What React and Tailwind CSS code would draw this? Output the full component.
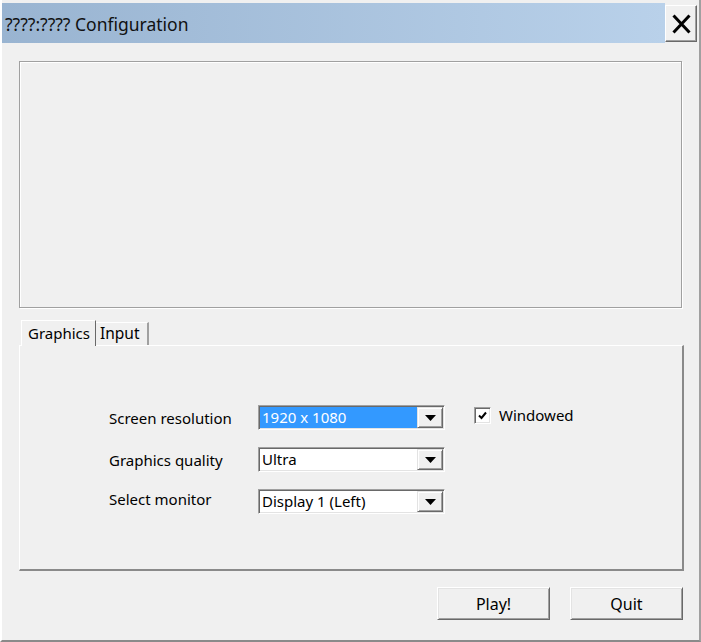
import React from "react";

const font = { fontFamily: '"Noto Sans", "Open Sans", Arial, sans-serif' };

function Arrow() {
  return (
    <svg width="11" height="6" viewBox="0 0 11 6">
      <path d="M0 0 L11 0 L5.5 6 Z" fill="#000" />
    </svg>
  );
}

function Combo({ value, selected }) {
  return (
    <div className="w-[187px] h-[25px] flex bg-white border border-t-[#a0a0a0] border-l-[#a0a0a0] border-b-white border-r-white shadow-[inset_1px_1px_0_#696969,inset_-1px_-1px_0_#e3e3e3]">
      <div className="flex-1 flex items-center pl-[1px] pt-[1px] pb-[1px]">
        <div
          className={
            "w-full h-full flex items-center pl-[2px] text-[15px] leading-none " +
            (selected ? "bg-[#3399ff] text-white" : "text-black")
          }
        >
          {value}
        </div>
      </div>
      <div className="w-[26px] my-[1px] mr-[1px] bg-[#f0f0f0] flex items-center justify-center border border-t-[#e3e3e3] border-l-[#e3e3e3] border-b-[#696969] border-r-[#696969] shadow-[inset_1px_1px_0_white,inset_-1px_-1px_0_#a0a0a0]">
        <Arrow />
      </div>
    </div>
  );
}

function Button({ children }) {
  return (
    <div className="w-[113px] h-[33px] flex items-center justify-center bg-[#f0f0f0] border border-t-white border-l-white border-b-[#696969] border-r-[#696969] shadow-[inset_1px_1px_0_#e3e3e3,inset_-1px_-1px_0_#a0a0a0] text-[16px] text-black">
      {children}
    </div>
  );
}

export default function App() {
  return (
    <div
      style={font}
      className="w-[701px] h-[642px] bg-[#f0f0f0] flex flex-col border-l-2 border-l-white border-r-2 border-r-[#a0a0a0] border-b-2 border-b-[#8a8a8a] overflow-hidden text-black"
    >
      {/* title row */}
      <div className="flex mt-[3px] h-[40px]">
        <div className="flex-1 flex items-center bg-gradient-to-r from-[#99b4d1] to-[#b9d1ea] pl-[3px] pt-[2px] text-[17.5px] text-[#111]">
          ????:???? Configuration
        </div>
        <div className="w-[32px] mt-[2px] mb-[1px] mr-[2px] flex items-center justify-center bg-[#f0f0f0] border border-t-white border-l-white border-b-[#696969] border-r-[#696969] shadow-[inset_-1px_-1px_0_#a0a0a0]">
          <svg width="19" height="20" viewBox="0 0 19 20">
            <path d="M1.5 1.5 L17.5 18.5 M17.5 1.5 L1.5 18.5" stroke="#000" strokeWidth="3" />
          </svg>
        </div>
      </div>

      {/* preview */}
      <div className="ml-[17px] mt-[18px] w-[663px] h-[247px] border border-[#a0a0a0] shadow-[1px_1px_0_white,inset_1px_1px_0_white]" />

      {/* tabs */}
      <div className="ml-[17px] mt-[11px] flex items-end h-[26px]">
        <div className="ml-[2px] h-[26px] pl-[6px] pr-[5px] flex items-center text-[15px] bg-[#f0f0f0] border-t border-l border-white border-r border-r-[#696969] relative z-10 -mb-[1px]">
          Graphics
        </div>
        <div className="h-[23px] pl-[4px] pr-[7px] flex items-center text-[15.5px] border-t border-white border-r-2 border-r-[#a0a0a0]">
          Input
        </div>
      </div>

      {/* pane */}
      <div className="ml-[17px] w-[665px] h-[226px] border-t border-l border-white border-r-2 border-b-2 border-r-[#8a8a8a] border-b-[#8a8a8a] flex flex-col">
        <div className="flex mt-[59px]">
          <div className="w-[89px]" />
          <div className="w-[149px] flex flex-col gap-[17px] text-[15px] pt-[1px]">
            <div className="h-[25px] flex items-center">Screen resolution</div>
            <div className="h-[25px] flex items-center">Graphics quality</div>
            <div className="h-[25px] flex items-center -mt-[3px]">Select monitor</div>
          </div>
          <div className="flex flex-col gap-[17px]">
            <Combo value="1920 x 1080" selected />
            <Combo value="Ultra" />
            <Combo value="Display 1 (Left)" />
          </div>
          <div className="ml-[29px] flex items-start gap-[8px] pt-[2px]">
            <div className="w-[17px] h-[17px] bg-white border border-t-[#a0a0a0] border-l-[#a0a0a0] border-b-white border-r-white shadow-[inset_1px_1px_0_#696969,inset_-1px_-1px_0_#e3e3e3] flex items-center justify-center">
              <svg width="9" height="9" viewBox="0 0 9 9">
                <path d="M1 4.5 L3.5 7 L8 1.5" fill="none" stroke="#000" strokeWidth="2" />
              </svg>
            </div>
            <div className="text-[15px] leading-[17px]">Windowed</div>
          </div>
        </div>
      </div>

      {/* buttons */}
      <div className="flex justify-end gap-[20px] mt-[16px] mr-[16px]">
        <Button>Play!</Button>
        <Button>Quit</Button>
      </div>
    </div>
  );
}
